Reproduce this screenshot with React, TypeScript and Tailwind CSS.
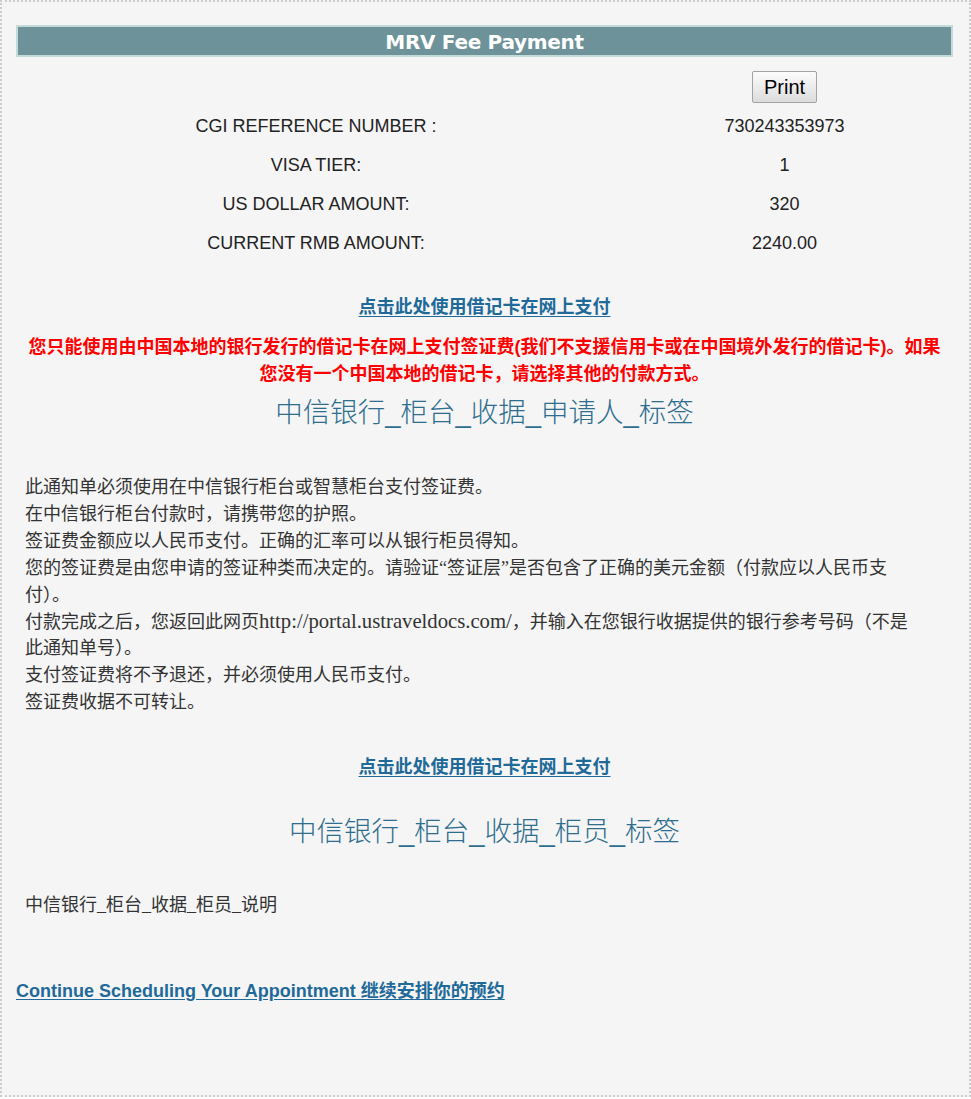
import React from "react";

const sans = "font-['Liberation_Sans','Noto_Sans_CJK_SC',sans-serif]";
const serif = "font-['Liberation_Serif','Noto_Sans_CJK_SC',serif]";

const rows: [string, string][] = [
  ["CGI REFERENCE NUMBER :", "730243353973"],
  ["VISA TIER:", "1"],
  ["US DOLLAR AMOUNT:", "320"],
  ["CURRENT RMB AMOUNT:", "2240.00"],
];

export default function App() {
  return (
    <div className="h-[1097px] w-[971px] border-2 border-dotted border-[#cccccc] bg-[#f5f5f5]">
      <div className="ml-[14px] w-[937px] pt-[23px]">
        <div className="flex h-[32px] items-center justify-center border-2 border-[#c3dbd8] bg-[#6d9299]">
          <span className="mt-[2px] font-['DejaVu_Sans',sans-serif] text-[20px] font-bold leading-none tracking-[-0.3px] text-white">
            MRV Fee Payment
          </span>
        </div>

        <div className={`mt-[9px] ${sans} text-[18px] text-[#222]`}>
          <div className="flex h-[41px] items-center">
            <div className="w-[600px]" />
            <div className="flex w-[337px] justify-center">
              <button className="h-[32px] w-[65px] rounded-[2px] border border-[#a3a3a3] bg-gradient-to-b from-[#fcfcfc] to-[#dcdcdc] font-['Liberation_Sans',sans-serif] text-[20px] leading-none text-black">
                Print
              </button>
            </div>
          </div>
          {rows.map(([k, v]) => (
            <div key={k} className="flex h-[39px] items-center">
              <div className="w-[600px] text-center">{k}</div>
              <div className="w-[337px] text-center">{v}</div>
            </div>
          ))}
        </div>

        <div className="mt-[31px] px-[9px] text-center">
          <a
            href="#"
            className={`${sans} text-[18px] font-bold leading-[27px] text-[#1f6a99] underline underline-offset-[3px]`}
          >
            点击此处使用借记卡在网上支付
          </a>
        </div>

        <p
          className={`mt-[13px] px-[9px] text-center ${sans} text-[18px] font-bold leading-[27px] text-[#ff0000]`}
        >
          您只能使用由中国本地的银行发行的借记卡在网上支付签证费(我们不支援信用卡或在中国境外发行的借记卡)。如果您没有一个中国本地的借记卡，请选择其他的付款方式。
        </p>

        <h2
          className={`mt-[7px] text-center ${sans} text-[27.5px] font-light leading-[36px] text-[#2e6d8e]`}
        >
          中信银行_柜台_收据_申请人_标签
        </h2>

        <div
          className={`mt-[43px] ml-[9px] w-[893px] ${serif} text-[18px] leading-[26.9px] text-[#333]`}
        >
          <p>此通知单必须使用在中信银行柜台或智慧柜台支付签证费。</p>
          <p>在中信银行柜台付款时，请携带您的护照。</p>
          <p>签证费金额应以人民币支付。正确的汇率可以从银行柜员得知。</p>
          <p>
            您的签证费是由您申请的签证种类而决定的。请验证“签证层”是否包含了正确的美元金额（付款应以人民币支付）。
          </p>
          <p>
            付款完成之后，您返回此网页<span className="text-[20.7px] leading-none">http://portal.ustraveldocs.com/</span>，并输入在您银行收据提供的银行参考号码（不是此通知单号）。
          </p>
          <p>支付签证费将不予退还，并必须使用人民币支付。</p>
          <p>签证费收据不可转让。</p>
        </div>

        <div className="mt-[38px] px-[9px] text-center">
          <a
            href="#"
            className={`${sans} text-[18px] font-bold leading-[27px] text-[#1f6a99] underline underline-offset-[3px]`}
          >
            点击此处使用借记卡在网上支付
          </a>
        </div>

        <h2
          className={`mt-[33px] text-center ${sans} text-[27.5px] font-light leading-[36px] text-[#2e6d8e]`}
        >
          中信银行_柜台_收据_柜员_标签
        </h2>

        <div
          className={`mt-[42px] ml-[9px] ${serif} text-[18px] leading-[27px] text-[#333]`}
        >
          中信银行_柜台_收据_柜员_说明
        </div>

        <div className="mt-[60px]">
          <a
            href="#"
            className={`${sans} text-[18px] font-bold leading-[24px] text-[#1f6a99] underline underline-offset-[2px]`}
          >
            Continue Scheduling Your Appointment 继续安排你的预约
          </a>
        </div>
      </div>
    </div>
  );
}
